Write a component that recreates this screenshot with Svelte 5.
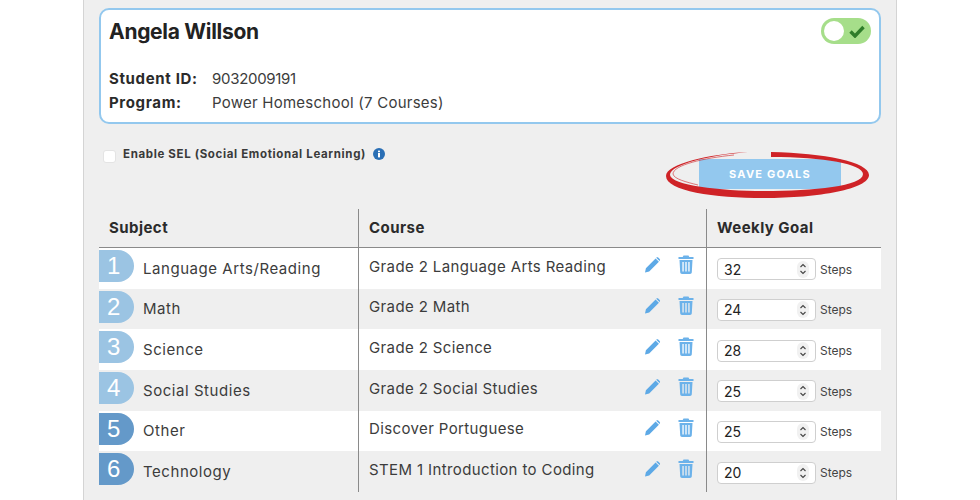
<script lang="ts">
  interface Row { n: number; subject: string; course: string; goal: number; dark?: boolean; }

  const rows: Row[] = [
    { n: 1, subject: 'Language Arts/Reading', course: 'Grade 2 Language Arts Reading', goal: 32 },
    { n: 2, subject: 'Math', course: 'Grade 2 Math', goal: 24 },
    { n: 3, subject: 'Science', course: 'Grade 2 Science', goal: 28 },
    { n: 4, subject: 'Social Studies', course: 'Grade 2 Social Studies', goal: 25 },
    { n: 5, subject: 'Other', course: 'Discover Portuguese', goal: 25, dark: true },
    { n: 6, subject: 'Technology', course: 'STEM 1 Introduction to Coding', goal: 20, dark: true }
  ];
</script>

<div class="panel">
  <div class="student-card">
    <div class="card-top">
      <h2>Angela Willson</h2>
      <div class="toggle">
        <span class="knob"></span>
        <svg width="16" height="13" viewBox="0 0 16 13"><path d="M1.500 6.500l4.500 4.500 8.500-9" fill="none" stroke="#2f7d2a" stroke-width="3.400"/></svg>
      </div>
    </div>
    <dl>
      <dt>Student ID:</dt><dd class="id">9032009191</dd>
      <dt>Program:</dt><dd>Power Homeschool (7 Courses)</dd>
    </dl>
  </div>

  <div class="actions">
    <label class="sel">
      <span class="check"></span>
      <span class="sel-text">Enable SEL (Social Emotional Learning)</span>
      <svg class="info" width="12" height="12" viewBox="0 0 12 12">
        <circle cx="6" cy="6" r="6" fill="#2a6fb5"/>
        <rect x="5" y="5" width="2" height="4.400" fill="#fff"/>
        <rect x="5" y="2.600" width="2" height="1.600" fill="#fff"/>
      </svg>
    </label>
    <div class="save-wrap">
      <button class="save">SAVE GOALS</button>
      <svg class="scribble" width="208" height="52" viewBox="0 0 208 52">
        <path d="M107 3 C160 4,205 13,205 26 C205 40,155 49,100 49 C50 49,2 42,2 27 C2 15,45 5,84 3 C48 6,6 15,6 26 C7 36,55 42,100 42 C150 42,199 37,199 25 C199 15,160 8,107 8 Z" fill="#cf2327"/>
        <path d="M70 6 C40 9,9 16,9 25 C10 30,22 33,34 36" fill="none" stroke="#cf2327" stroke-width="0.600"/>
      </svg>
    </div>
  </div>

  <div class="table">
    <div class="thead">
      <div class="col-subject">Subject</div>
      <div class="col-course">Course</div>
      <div class="col-goal">Weekly Goal</div>
    </div>
    {#each rows as row, i}
      <div class="row" class:alt={i % 2 === 1}>
        <div class="col-subject">
          <span class="num" class:dark={row.dark}>{row.n}</span>
          <span class="subject">{row.subject}</span>
        </div>
        <div class="col-course">
          <span class="course">{row.course}</span>
          <svg class="pencil" width="17" height="17" viewBox="0 0 17 17">
            <path d="M1 16.500l.9-4.300L11.600 2.500l3.300 3.300L5.200 15.500z M12.500 1.500c.5-.5 1.200-.5 1.700 0l1.500 1.500c.5.5.5 1.200 0 1.700l-.2.300-3.300-3.300z" fill="#5da9e6"/>
          </svg>
          <svg class="trash" width="16" height="19" viewBox="0 0 16 19">
            <path d="M5.500 0.500h5l.8 1.500H15.500v2H0.500V2h4.200z" fill="#6cb2ea"/>
            <path fill-rule="evenodd" d="M1.500 5h13l-.7 12.300c-.1 1-.8 1.700-1.800 1.700H4c-1 0-1.700-.7-1.800-1.700z M4.400 7v9.500h1.300V7z M7.350 7v9.500h1.300V7z M10.300 7v9.500h1.300V7z" fill="#6cb2ea"/>
          </svg>
        </div>
        <div class="col-goal">
          <div class="stepper">
            <span class="value">{row.goal}</span>
            <span class="spin">
              <svg width="8" height="14" viewBox="0 0 8 14"><path d="M1.500 5L4 2.500 6.500 5M1.500 9L4 11.500 6.500 9" fill="none" stroke="#444" stroke-width="1.100"/></svg>
            </span>
          </div>
          <span class="steps">Steps</span>
        </div>
      </div>
    {/each}
  </div>
</div>

<style>
  :global(body) { background: #fff; }

  .panel {
    width: 814px; height: 500px; margin-left: 83px; box-sizing: border-box;
    padding: 8px 15px 0 15px; background: #efefef; overflow: hidden;
    border-left: 1px solid #d4d4d4; border-right: 1px solid #d4d4d4;
    font-family: "Inter", "Liberation Sans", sans-serif; color: #2b2b2b;
  }

  .student-card {
    height: 116px; box-sizing: border-box; padding: 8px 8px 0 8px;
    background: #fff; border: 2px solid #93c8ee; border-radius: 10px;
  }
  .card-top { display: flex; justify-content: space-between; align-items: flex-start; }
  h2 { margin: 0; font-size: 21px; line-height: 28px; font-weight: 700; color: #222; letter-spacing: -0.300px; }
  .toggle {
    width: 50px; height: 26px; box-sizing: border-box; padding: 3px 6px 3px 3px;
    display: flex; justify-content: space-between; align-items: center;
    background: #a6de8a; border-radius: 13px;
  }
  .knob { width: 20px; height: 20px; border-radius: 50%; background: #fff; }

  dl { margin: 21px 0 0 0; display: grid; grid-template-columns: 103px 1fr; font-size: 15px; line-height: 24px; }
  dt { font-weight: 700; color: #2b2b2b; letter-spacing: 0.650px; }
  dd { margin: 0; color: #3c3c3c; letter-spacing: 0.250px; }
  dd.id { letter-spacing: -0.300px; }

  .actions { display: flex; justify-content: space-between; height: 85px; }
  .sel { display: flex; align-items: center; height: 14px; margin: 23px 0 0 4px; font-size: 11.500px; font-weight: 700; color: #3a3a3a; letter-spacing: 0.650px; }
  .check { width: 11px; height: 11px; margin-top: 4px; background: #fff; border: 1px solid #e4e4e4; border-radius: 3px; }
  .sel-text { margin-left: 7px; }
  .info { margin-left: 7px; }

  .save-wrap { position: relative; width: 142px; height: 30px; margin: 35px 40px 0 0; }
  .save {
    display: block; width: 142px; height: 30px; padding: 0; border: 0;
    background: #93c8ee; color: #fff; font: 700 11px "Inter", "Liberation Sans", sans-serif; letter-spacing: 1.200px;
  }
  .scribble { position: absolute; left: -35px; top: -10px; }

  .table { height: 284px; }
  .thead { display: flex; height: 38px; border-bottom: 1px solid #8a8a8a; font-size: 15px; font-weight: 700; color: #2b2b2b; letter-spacing: 0.450px; }
  .thead > div { display: flex; align-items: center; padding-bottom: 2px; }
  .row { display: flex; height: 40.670px; background: #fff; font-size: 15px; color: #3c3c3c; }
  .row.alt { background: #efefef; }
  .col-subject { width: 259px; box-sizing: border-box; display: flex; align-items: center; }
  .thead .col-subject { padding-left: 10px; }
  .col-course { width: 348px; box-sizing: border-box; display: flex; align-items: center; padding-left: 10px; border-left: 1px solid #8a8a8a; }
  .col-goal { flex: 1; display: flex; align-items: center; box-sizing: border-box; padding-left: 10px; border-left: 1px solid #8a8a8a; }

  .num {
    width: 35px; height: 32px; margin-top: 2px; align-self: flex-start; flex-shrink: 0; box-sizing: border-box; padding-left: 8px;
    display: flex; align-items: center;
    background: #9bc4e3; color: #fff; border-radius: 0 16px 16px 0;
    font: 400 24px/30px "Liberation Sans", sans-serif;
  }
  .num.dark { background: #6499c9; }
  .subject { margin-left: 9px; letter-spacing: 0.550px; }
  .course { flex: 1; padding-bottom: 4px; letter-spacing: 0.380px; }

  .pencil { margin: -7px 0 0 0; }
  .trash { margin: -7px 12px 0 17px; }

  .stepper {
    width: 99px; height: 22px; margin-top: 2px; box-sizing: border-box; padding: 0 6px 0 6px;
    display: flex; justify-content: space-between; align-items: center;
    background: #fff; border: 1px solid #cfcfcf; border-radius: 4px;
    font-size: 14px; color: #222;
  }
  .spin { display: flex; align-items: center; justify-content: center; width: 12px; height: 17px; background: #f1f1f1; border-radius: 6px; }
  .steps { margin: 2px 0 0 4px; font-size: 12px; color: #444; }
</style>
